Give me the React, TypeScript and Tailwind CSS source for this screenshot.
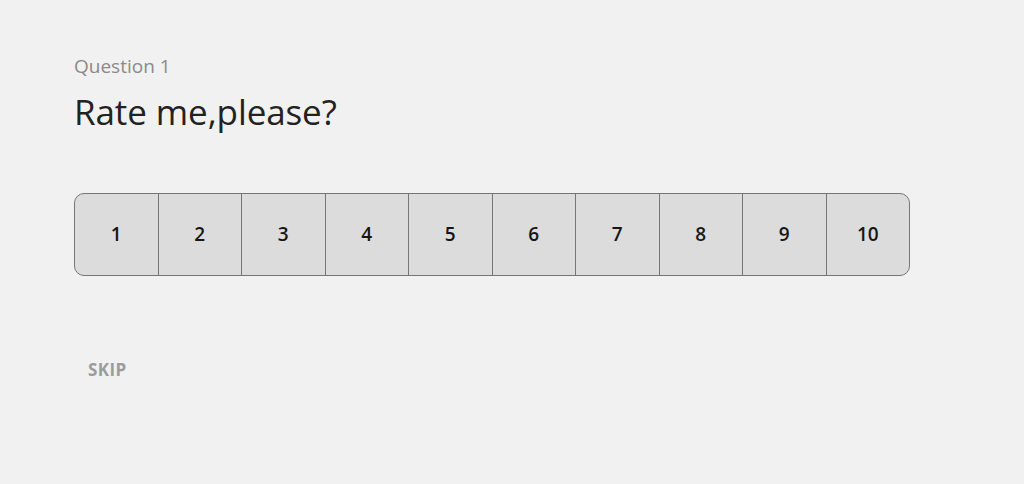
const SCORES = [1, 2, 3, 4, 5, 6, 7, 8, 9, 10];

export default function App() {
  return (
    <div className="min-h-[484px] w-full bg-[#f1f1f1] pl-[74px] pt-[52px] font-['Open_Sans',sans-serif]">
      <p className="text-[19px] leading-[28px] text-[#8a8a8a]">Question 1</p>
      <h1 className="mt-[8px] text-[35px] leading-[48px] tracking-[-0.1px] text-[#222]">Rate me,please?</h1>

      <div className="mt-[57px] flex h-[83px] w-[836px] overflow-hidden rounded-[10px] border border-[#767676] bg-[#dcdcdc]">
        {SCORES.map((n, i) => (
          <button
            key={n}
            type="button"
            className={`flex flex-1 items-center justify-center text-[19px] font-semibold text-[#161616] ${
              i > 0 ? 'border-l border-[#767676]' : ''
            }`}
          >
            {n}
          </button>
        ))}
      </div>

      <button type="button" className="ml-[14px] mt-[81px] text-[17px] font-bold tracking-[0.4px] text-[#9c9c9c]">
        SKIP
      </button>
    </div>
  );
}
